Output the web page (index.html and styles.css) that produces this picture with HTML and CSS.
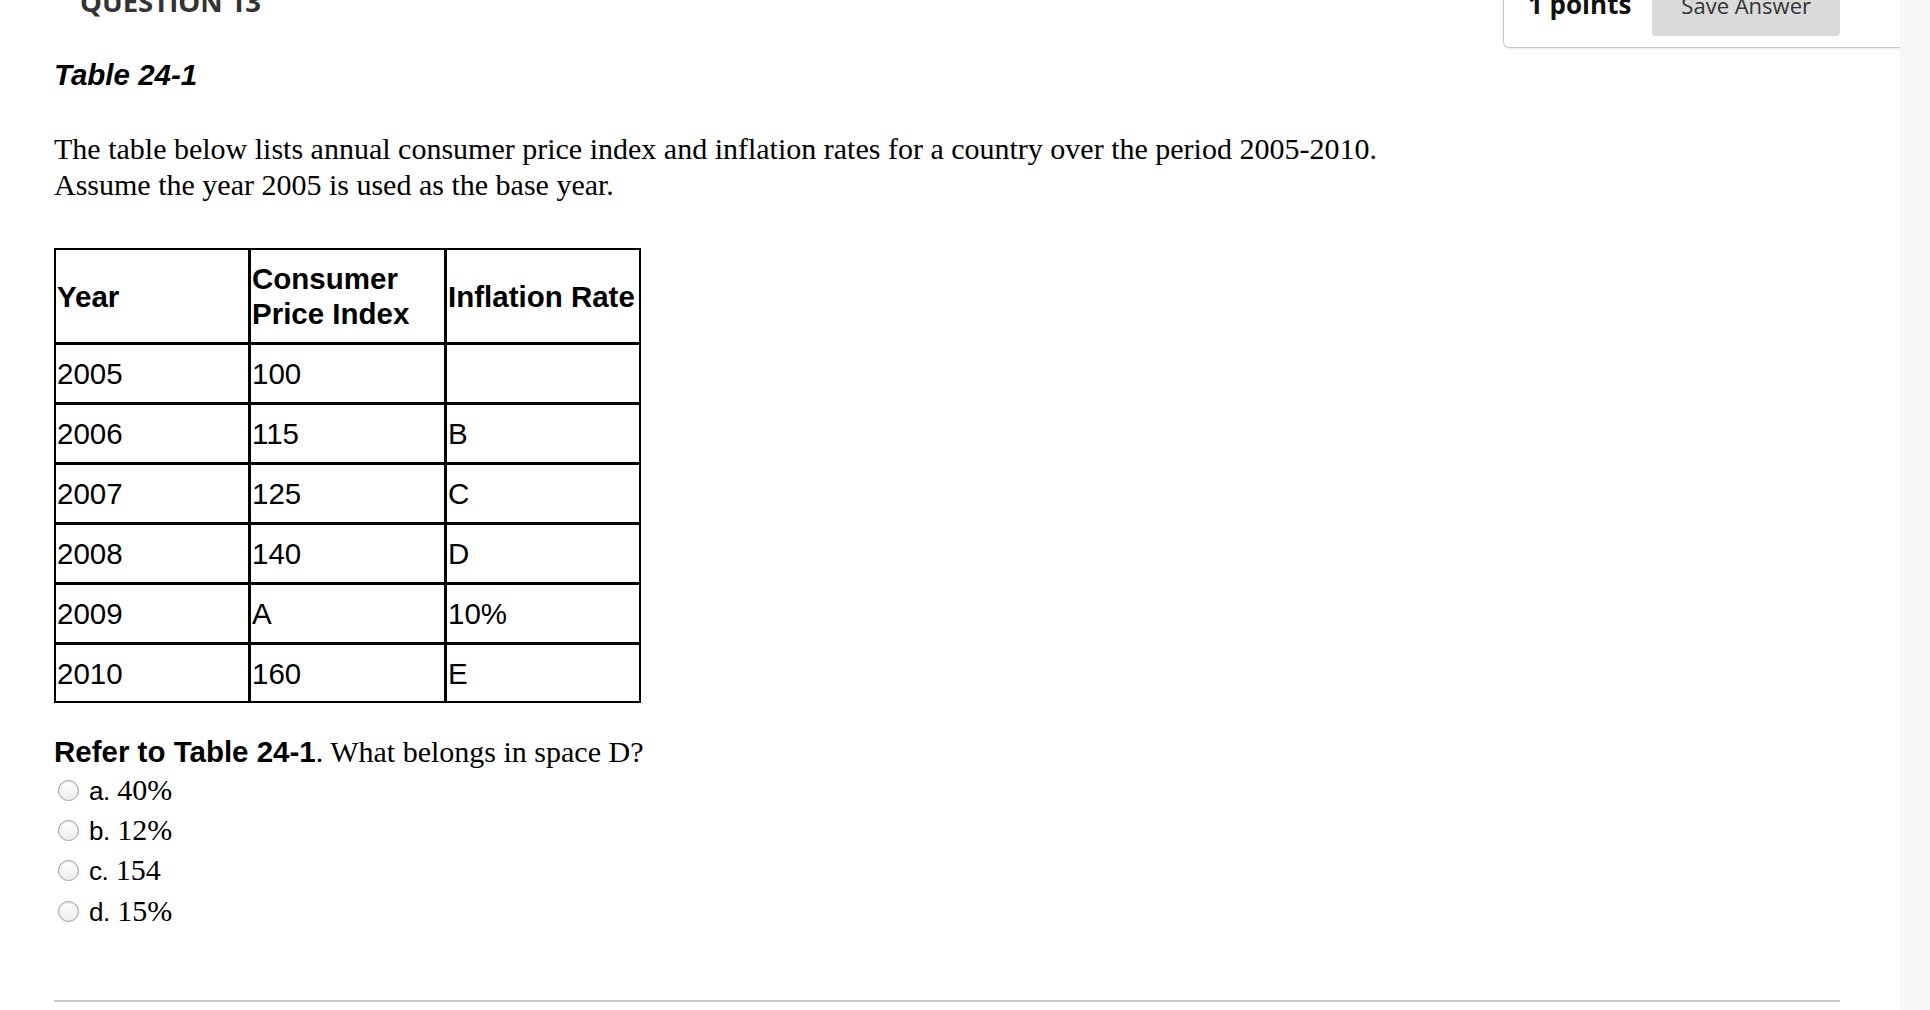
FILE: index.html
```html
<!DOCTYPE html>
<html lang="en">
<head>
<meta charset="utf-8">
<title>Question 13</title>
<link rel="stylesheet" href="styles.css">
</head>
<body>
<div class="page">
  <main class="content">
    <header class="q-header">
      <h2 class="q-title">QUESTION 13</h2>
      <div class="points-box">
        <span class="points">1 points</span>
        <button class="save-btn" type="button">Save Answer</button>
      </div>
    </header>

    <section class="q-body">
      <p class="tbl-title">Table 24-1</p>
      <p class="intro">The table below lists annual consumer price index and inflation rates for a country over the period 2005-2010.<br>Assume the year 2005 is used as the base year.</p>

      <table class="data">
        <thead>
          <tr>
            <th class="col-year">Year</th>
            <th class="col-cpi">Consumer Price Index</th>
            <th class="col-rate">Inflation Rate</th>
          </tr>
        </thead>
        <tbody>
          <tr><td>2005</td><td>100</td><td></td></tr>
          <tr><td>2006</td><td>115</td><td>B</td></tr>
          <tr><td>2007</td><td>125</td><td>C</td></tr>
          <tr><td>2008</td><td>140</td><td>D</td></tr>
          <tr><td>2009</td><td>A</td><td>10%</td></tr>
          <tr><td>2010</td><td>160</td><td>E</td></tr>
        </tbody>
      </table>

      <p class="question"><b class="q-ref">Refer to Table 24-1</b>. What belongs in space D?</p>

      <ul class="options">
        <li class="option"><input class="radio" type="radio" name="ans" id="a"><label class="opt-label" for="a"><span class="opt-letter">a.</span> <span class="opt-text">40%</span></label></li>
        <li class="option"><input class="radio" type="radio" name="ans" id="b"><label class="opt-label" for="b"><span class="opt-letter">b.</span> <span class="opt-text">12%</span></label></li>
        <li class="option"><input class="radio" type="radio" name="ans" id="c"><label class="opt-label" for="c"><span class="opt-letter">c.</span> <span class="opt-text">154</span></label></li>
        <li class="option"><input class="radio" type="radio" name="ans" id="d"><label class="opt-label" for="d"><span class="opt-letter">d.</span> <span class="opt-text">15%</span></label></li>
      </ul>
    </section>

    <hr class="divider">
  </main>
  <aside class="rail"></aside>
</div>
</body>
</html>
```

FILE: styles.css
```css
html, body {
  margin: 0;
  padding: 0;
  background: #ffffff;
}

.page {
  display: flex;
  height: 100vh;
  overflow: hidden;
}

.content {
  flex: 1;
  display: flex;
  flex-direction: column;
  min-width: 0;
}

.rail {
  width: 30px;
  background: #f6f6f6;
}

/* header */
.q-header {
  display: flex;
  justify-content: space-between;
  align-items: flex-start;
  margin-top: -20px;
  height: 68px;
  padding-left: 80px;
}

.q-title {
  margin: 0;
  padding-top: 3px;
  font: 700 27.5px/1.362 "Open Sans", sans-serif;
  color: #333333;
}

.points-box {
  display: flex;
  align-items: baseline;
  gap: 21px;
  height: 67px;
  padding: 0 60px 0 24px;
  border-left: 1px solid #c8c8c8;
  border-bottom: 1px solid #c8c8c8;
  border-bottom-left-radius: 6px;
  box-shadow: 0 1px 2px rgba(0, 0, 0, 0.08);
}

.points {
  font: 700 26px "Open Sans", sans-serif;
  color: #111111;
}

.save-btn {
  font: 400 22px "Open Sans", sans-serif;
  color: #333333;
  background: #dadada;
  border: 0;
  border-radius: 4px;
  padding: 10px 29px 16px;
}

/* body */
.q-body {
  padding-left: 54px;
  color: #000000;
}

.tbl-title {
  margin: 9px 0 0;
  font: italic 700 29.5px/35px "Liberation Sans", Arial, sans-serif;
}

.intro {
  margin: 39px 0 0;
  font: 30px/36px "Liberation Serif", "Times New Roman", serif;
}

.data {
  margin-top: 45px;
  border-collapse: separate;
  border-spacing: 0;
  border: 2px solid #000000;
  font: 29.5px/35px "Liberation Sans", Arial, sans-serif;
}

.data th,
.data td {
  padding: 11px 1px;
  text-align: left;
  vertical-align: middle;
  border-right: 3px solid #000000;
  border-bottom: 3px solid #000000;
}

.data th {
  font-weight: 700;
  padding: 11px 1px;
}

.data th:last-child,
.data td:last-child {
  border-right: 0;
}

.data tbody tr:last-child td {
  border-bottom: 0;
  padding-bottom: 10px;
}

.col-year { width: 190px; }
.col-cpi { width: 191px; }
.col-rate { width: 190px; white-space: nowrap; }

.question {
  margin: 31px 0 0;
  font: 30px/36px "Liberation Serif", "Times New Roman", serif;
}

.q-ref {
  font-family: "Liberation Sans", Arial, sans-serif;
  font-weight: 700;
  font-size: 29.5px;
}

.options {
  list-style: none;
  margin: 0;
  padding: 0;
}

.option {
  display: flex;
  align-items: center;
  height: 40.33px;
}

.radio {
  appearance: none;
  -webkit-appearance: none;
  flex: none;
  width: 21px;
  height: 21px;
  margin: 0 10px 0 4px;
  border: 1px solid #9c9c9c;
  border-radius: 50%;
  background: linear-gradient(#ffffff, #ececec);
  box-shadow: inset 0 1px 2px rgba(0, 0, 0, 0.12);
}

.opt-label {
  font: 30px/36px "Liberation Serif", "Times New Roman", serif;
}

.opt-letter {
  font-family: "Liberation Sans", Arial, sans-serif;
  font-size: 26px;
  letter-spacing: -0.5px;
}

.opt-text {
  font-family: "Liberation Serif", "Times New Roman", serif;
  font-size: 30px;
}

.divider {
  margin: auto 60px 8px 54px;
  height: 2px;
  border: 0;
  background: #c8c8c8;
}
```
